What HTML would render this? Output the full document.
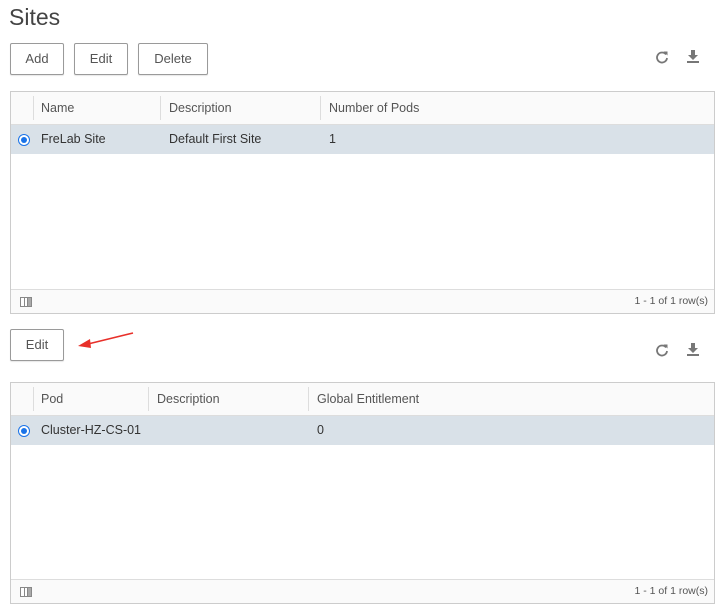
<!DOCTYPE html>
<html><head><style>
*{box-sizing:border-box;margin:0;padding:0}
body{width:720px;height:608px;background:#fff;font-family:"Liberation Sans",sans-serif;color:#333;position:relative;overflow:hidden}
.abs{position:absolute}
h1{position:absolute;left:9px;top:4px;font-size:23px;font-weight:normal;color:#444}
.btn{position:absolute;height:32px;border:1px solid #9a9a9a;border-radius:2px;background:#fff;font-size:13px;color:#555;text-align:center;line-height:30px;box-shadow:0 1px 1px rgba(0,0,0,.1)}
.tbl{position:absolute;left:10px;width:705px;border:1px solid #ccc;background:#fff}
.hdr{position:absolute;left:0;right:0;top:0;height:33px;background:#fafafa;border-bottom:1px solid #ddd}
.sep{position:absolute;top:4px;height:24px;width:1px;background:#ddd}
.ht{position:absolute;top:9px;font-size:12.5px;color:#555}
.row{position:absolute;left:0;right:0;top:33px;height:29px;background:#d9e1e8}
.rt{position:absolute;top:7px;font-size:12.5px;color:#333}
.radio{position:absolute;left:7px;top:9px;width:12px;height:12px;border-radius:50%;border:1px solid #1a73e8;background:#fff}
.radio:after{content:"";position:absolute;left:2px;top:2px;width:6px;height:6px;border-radius:50%;background:#1a73e8}
.ftr{position:absolute;left:0;right:0;bottom:0;height:24px;background:#fafafa;border-top:1px solid #ddd}
.cnt{position:absolute;right:6px;top:0;line-height:23px;font-size:10.5px;color:#555}
.colic{position:absolute;left:9px;top:7px;width:12px;height:10px;border:1px solid #888;background:linear-gradient(90deg,#fff 0 3px,#888 3px 4px,#fff 4px 6px,#888 6px 7px,#aaa 7px)}
</style></head><body>
<h1>Sites</h1>
<div class="btn" style="left:10px;top:43px;width:54px">Add</div>
<div class="btn" style="left:74px;top:43px;width:54px">Edit</div>
<div class="btn" style="left:138px;top:43px;width:70px">Delete</div>
<svg class="abs" style="left:654px;top:49px" width="16" height="16" viewBox="0 0 16 16"><path d="M12 5.5A5 5 0 1 0 13 9" fill="none" stroke="#777" stroke-width="1.8"/><path d="M9.5 2.5L13.5 2.5 13.5 6.5Z" fill="#777"/></svg>
<svg class="abs" style="left:685px;top:48px" width="16" height="16" viewBox="0 0 16 16"><path d="M6 2h4v5h3l-5 5-5-5h3z" fill="#777"/><rect x="2" y="13" width="12" height="2" fill="#777"/></svg>

<div class="tbl" style="top:91px;height:223px">
 <div class="hdr"><div class="sep" style="left:22px"></div><div class="sep" style="left:149px"></div><div class="sep" style="left:309px"></div>
 <div class="ht" style="left:30px">Name</div><div class="ht" style="left:158px">Description</div><div class="ht" style="left:318px">Number of Pods</div></div>
 <div class="row"><div class="radio"></div><div class="rt" style="left:30px">FreLab Site</div><div class="rt" style="left:158px">Default First Site</div><div class="rt" style="left:318px">1</div></div>
 <div class="ftr"><div class="colic"></div><div class="cnt">1 - 1 of 1 row(s)</div></div>
</div>

<div class="btn" style="left:10px;top:329px;width:54px">Edit</div>
<svg class="abs" style="left:70px;top:325px" width="70" height="30"><line x1="63" y1="8" x2="18" y2="19" stroke="#e8302a" stroke-width="1.6"/><path d="M8 21L20 14 21 23Z" fill="#e8302a"/></svg>
<svg class="abs" style="left:654px;top:342px" width="16" height="16" viewBox="0 0 16 16"><path d="M12 5.5A5 5 0 1 0 13 9" fill="none" stroke="#777" stroke-width="1.8"/><path d="M9.5 2.5L13.5 2.5 13.5 6.5Z" fill="#777"/></svg>
<svg class="abs" style="left:685px;top:341px" width="16" height="16" viewBox="0 0 16 16"><path d="M6 2h4v5h3l-5 5-5-5h3z" fill="#777"/><rect x="2" y="13" width="12" height="2" fill="#777"/></svg>

<div class="tbl" style="top:382px;height:222px">
 <div class="hdr"><div class="sep" style="left:22px"></div><div class="sep" style="left:137px"></div><div class="sep" style="left:297px"></div>
 <div class="ht" style="left:30px">Pod</div><div class="ht" style="left:146px">Description</div><div class="ht" style="left:306px">Global Entitlement</div></div>
 <div class="row"><div class="radio"></div><div class="rt" style="left:30px">Cluster-HZ-CS-01</div><div class="rt" style="left:306px">0</div></div>
 <div class="ftr"><div class="colic"></div><div class="cnt">1 - 1 of 1 row(s)</div></div>
</div>
</body></html>
